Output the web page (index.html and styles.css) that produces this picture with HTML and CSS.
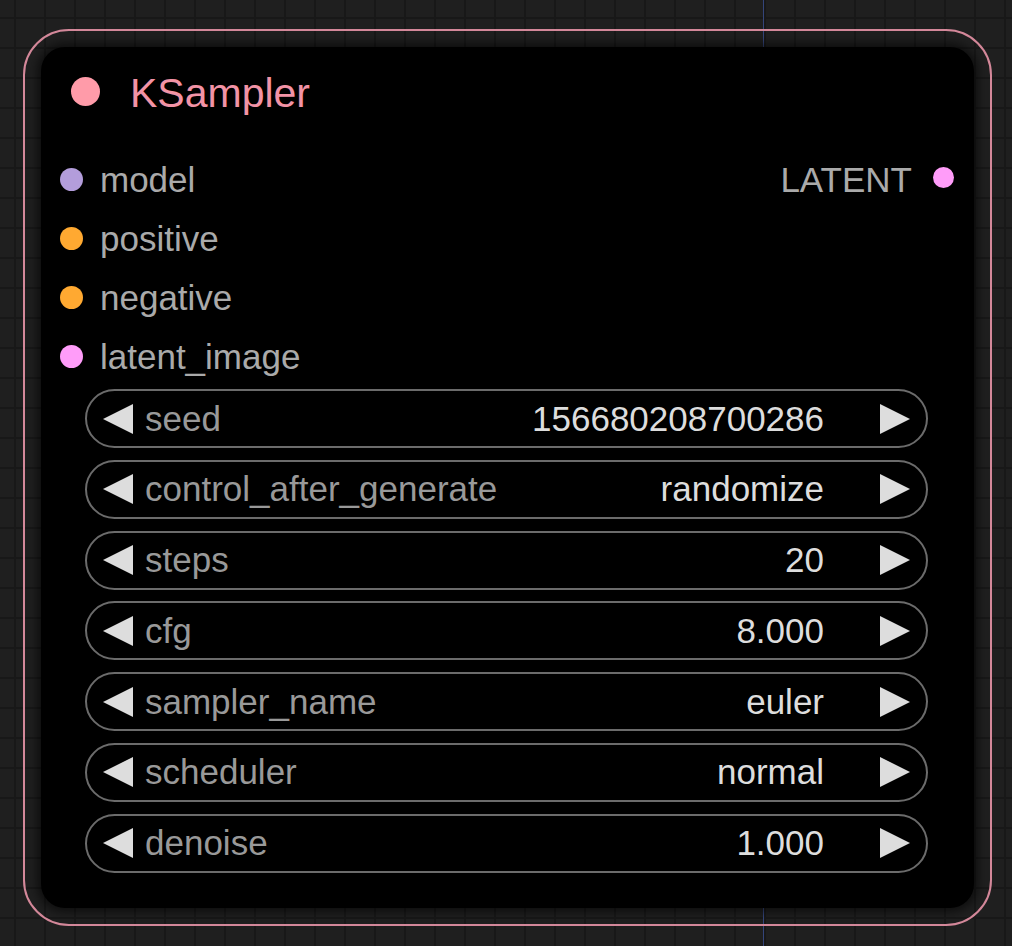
FILE: index.html
```html
<!DOCTYPE html>
<html lang="en">
<head>
    <meta charset="UTF-8">
    <meta name="viewport" content="width=device-width, initial-scale=1.0">
    <title>KSampler</title>
    <link rel="stylesheet" href="styles.css">
</head>
<body>
    <div class="link-line"></div>

    <div class="node-frame">
        <div class="node">
            <div class="node-title">
                <span class="title-dot"></span>
                <span class="title-text">KSampler</span>
            </div>

            <div class="slots">
                <div class="slot-row">
                    <div class="slot-in"><span class="dot model"></span>model</div>
                    <div class="slot-out">LATENT<span class="dot latent out"></span></div>
                </div>
                <div class="slot-row">
                    <div class="slot-in"><span class="dot cond"></span>positive</div>
                </div>
                <div class="slot-row">
                    <div class="slot-in"><span class="dot cond"></span>negative</div>
                </div>
                <div class="slot-row">
                    <div class="slot-in"><span class="dot latent"></span>latent_image</div>
                </div>
            </div>

            <div class="widgets">
                <div class="widget">
                    <svg class="arrow" viewBox="0 0 30 30"><path d="M30 0 L0 15 L30 30 Z"/></svg>
                    <span class="widget-label">seed</span>
                    <span class="widget-value">156680208700286</span>
                    <svg class="arrow" viewBox="0 0 30 30"><path d="M0 0 L30 15 L0 30 Z"/></svg>
                </div>
                <div class="widget">
                    <svg class="arrow" viewBox="0 0 30 30"><path d="M30 0 L0 15 L30 30 Z"/></svg>
                    <span class="widget-label">control_after_generate</span>
                    <span class="widget-value">randomize</span>
                    <svg class="arrow" viewBox="0 0 30 30"><path d="M0 0 L30 15 L0 30 Z"/></svg>
                </div>
                <div class="widget">
                    <svg class="arrow" viewBox="0 0 30 30"><path d="M30 0 L0 15 L30 30 Z"/></svg>
                    <span class="widget-label">steps</span>
                    <span class="widget-value">20</span>
                    <svg class="arrow" viewBox="0 0 30 30"><path d="M0 0 L30 15 L0 30 Z"/></svg>
                </div>
                <div class="widget">
                    <svg class="arrow" viewBox="0 0 30 30"><path d="M30 0 L0 15 L30 30 Z"/></svg>
                    <span class="widget-label">cfg</span>
                    <span class="widget-value">8.000</span>
                    <svg class="arrow" viewBox="0 0 30 30"><path d="M0 0 L30 15 L0 30 Z"/></svg>
                </div>
                <div class="widget">
                    <svg class="arrow" viewBox="0 0 30 30"><path d="M30 0 L0 15 L30 30 Z"/></svg>
                    <span class="widget-label">sampler_name</span>
                    <span class="widget-value">euler</span>
                    <svg class="arrow" viewBox="0 0 30 30"><path d="M0 0 L30 15 L0 30 Z"/></svg>
                </div>
                <div class="widget">
                    <svg class="arrow" viewBox="0 0 30 30"><path d="M30 0 L0 15 L30 30 Z"/></svg>
                    <span class="widget-label">scheduler</span>
                    <span class="widget-value">normal</span>
                    <svg class="arrow" viewBox="0 0 30 30"><path d="M0 0 L30 15 L0 30 Z"/></svg>
                </div>
                <div class="widget">
                    <svg class="arrow" viewBox="0 0 30 30"><path d="M30 0 L0 15 L30 30 Z"/></svg>
                    <span class="widget-label">denoise</span>
                    <span class="widget-value">1.000</span>
                    <svg class="arrow" viewBox="0 0 30 30"><path d="M0 0 L30 15 L0 30 Z"/></svg>
                </div>
            </div>
        </div>
    </div>
</body>
</html>
```

FILE: styles.css
```css
:root {
    --canvas: #1f1f1f;
    --grid: #181818;
    --node-bg: #000000;
    --frame: #d4889a;
    --title: #f293a6;
    --title-dot: #ff9ba9;
    --slot-text: #aaaaaa;
    --widget-border: #6b6b6b;
    --widget-label: #999999;
    --widget-value: #dddddd;
}

html, body {
    height: 100%;
}

body {
    margin: 0;
    padding: 29px 0 0 23px;
    box-sizing: border-box;
    overflow: hidden;
    font-family: "Liberation Sans", Arial, sans-serif;
    background-color: var(--canvas);
    background-image:
        linear-gradient(to right, var(--grid) 2px, transparent 2px),
        linear-gradient(to bottom, var(--grid) 2px, transparent 2px);
    background-size: 30px 30px;
    background-position: 14px 17px;
    position: relative;
}

/* link wire running behind the node */
.link-line {
    position: absolute;
    left: 763px;
    top: 0;
    bottom: 0;
    width: 1px;
    background: #34457a;
}

.node-frame {
    position: relative;
    width: 969px;
    height: 897px;
    box-sizing: border-box;
    border: 2px solid var(--frame);
    border-radius: 46px;
    padding: 16px;
    display: flex;
}

.node {
    flex: 1;
    background: var(--node-bg);
    border-radius: 24px;
    box-shadow: 0 0 10px 4px rgba(0, 0, 0, 0.55);
}

.node-title {
    height: 89px;
    display: flex;
    align-items: center;
    padding-left: 30px;
}

.title-dot {
    width: 29px;
    height: 29px;
    border-radius: 50%;
    background: var(--title-dot);
    margin-right: 30px;
}

.title-text {
    font-size: 41px;
    color: var(--title);
    padding-top: 3px;
}

.slots {
    margin-top: 14px;
}

.slot-row {
    height: 59px;
    display: flex;
    align-items: center;
    justify-content: space-between;
    font-size: 35px;
    color: var(--slot-text);
}

.slot-in {
    display: flex;
    align-items: center;
    padding-left: 19px;
}

.slot-out {
    display: flex;
    align-items: center;
    padding-right: 20px;
}

.dot {
    width: 23px;
    height: 23px;
    border-radius: 50%;
    margin-right: 17px;
}

.dot.out {
    width: 21px;
    height: 21px;
    margin-right: 0;
    margin-left: 21px;
    margin-top: -4px;
}

.dot.model {
    background: #b39ddb;
}

.dot.cond {
    background: #ffa931;
}

.dot.latent {
    background: #ff9cf9;
}

.widgets {
    margin-top: 3px;
    padding: 0 46px 0 44px;
    display: flex;
    flex-direction: column;
    gap: 11.8px;
}

.widget {
    height: 59px;
    box-sizing: border-box;
    border: 2px solid var(--widget-border);
    border-radius: 30px;
    display: flex;
    align-items: center;
    padding: 0 16px;
    font-size: 35px;
}

.arrow {
    width: 30px;
    height: 30px;
    fill: var(--widget-value);
    flex-shrink: 0;
}

.widget-label {
    flex: 1;
    margin-left: 12px;
    color: var(--widget-label);
}

.widget-value {
    color: var(--widget-value);
    margin-right: 56px;
}
```
